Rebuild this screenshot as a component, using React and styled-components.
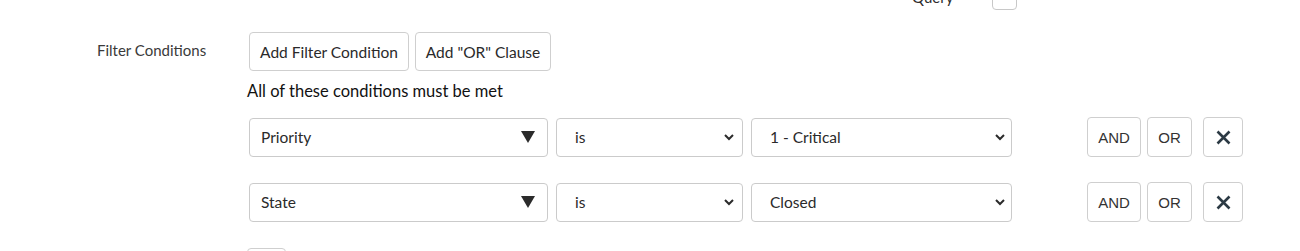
import React from "react";
import styled, { createGlobalStyle } from "styled-components";

const Global = createGlobalStyle`
  html, body { margin: 0; padding: 0; background: #fff; }
  body { font-family: "Lato", "Open Sans", sans-serif; color: #1e1e1e; overflow: hidden; }
  * { box-sizing: border-box; }
`;

const Page = styled.div`
  width: 1300px;
  padding-left: 97px;
  margin-top: -16px;
`;

const TopRow = styled.div`
  display: flex;
  align-items: center;
  height: 26px;
  margin-left: 815px;
  gap: 37px;
`;

const TopLabel = styled.span`
  font-size: 15px;
  color: #2e2e2e;
  width: 43px;
`;

const Checkbox = styled.span`
  display: block;
  width: 25px;
  height: 26px;
  border: 1px solid #c8c8c8;
  border-radius: 4px;
`;

const Section = styled.div`
  display: grid;
  grid-template-columns: 152px 1fr;
  margin-top: 22px;
`;

const Label = styled.div`
  font-size: 15px;
  color: #3a3a3a;
  padding-top: 9px;
`;

const Content = styled.div`
  display: flex;
  flex-direction: column;
`;

const ButtonRow = styled.div`
  display: flex;
  gap: 6px;
`;

const Button = styled.button`
  font-family: inherit;
  font-size: 15.5px;
  color: #2a2a2a;
  background: #fff;
  border: 1px solid #cfcfcf;
  border-radius: 4px;
  height: 39px;
  width: ${(p) => p.$w}px;
  padding: 0;
  display: flex;
  align-items: center;
  justify-content: center;
`;

const Title = styled.div`
  font-size: 16.5px;
  color: #111;
  margin: 10px 0 0 -2px;
  line-height: 20px;
`;

const Rows = styled.div`
  display: flex;
  flex-direction: column;
  gap: 25px;
  margin-top: 16px;
`;

const Row = styled.div`
  display: flex;
  align-items: center;
`;

const Selects = styled.div`
  display: flex;
  gap: 8px;
`;

const Select = styled.div`
  width: ${(p) => p.$w}px;
  height: 39px;
  border: 1px solid #cbcbcb;
  border-radius: 4px;
  display: flex;
  align-items: center;
  justify-content: space-between;
  padding: 0 ${(p) => p.$pr}px 0 ${(p) => p.$pl}px;
  font-size: 15.5px;
  color: #2a2a2a;
`;

const Actions = styled.div`
  display: flex;
  gap: 6px;
  margin-left: 75px;
`;

const SmallButton = styled.button`
  font-family: "Liberation Sans", Arial, sans-serif;
  font-size: 15px;
  color: #333;
  background: #fff;
  border: 1px solid #cfcfcf;
  border-radius: 4px;
  height: 40px;
  width: ${(p) => p.$w}px;
  margin-left: ${(p) => p.$ml || 0}px;
  padding: 0;
  display: flex;
  align-items: center;
  justify-content: center;
`;

const BottomButton = styled.div`
  width: 39px;
  height: 39px;
  margin-top: 26px;
  margin-left: -2px;
  border: 1px solid #cfcfcf;
  border-radius: 4px;
`;

const Triangle = () => (
  <svg width="14" height="12" viewBox="0 0 14 12">
    <polygon points="0,0 14,0 7,12" fill="#2b2b2b" />
  </svg>
);

const Chevron = () => (
  <svg width="10" height="7" viewBox="0 0 10 7">
    <polyline points="1,1 5,5 9,1" fill="none" stroke="#2b2b2b" strokeWidth="2" />
  </svg>
);

const XIcon = () => (
  <svg width="15" height="15" viewBox="0 0 15 15">
    <path d="M1.5 1.5 L13.5 13.5 M13.5 1.5 L1.5 13.5" stroke="#2c3a44" strokeWidth="2.6" strokeLinecap="butt" />
  </svg>
);

const conditions = [
  { field: "Priority", op: "is", value: "1 - Critical" },
  { field: "State", op: "is", value: "Closed" },
];

export default function App() {
  return (
    <>
      <Global />
      <Page>
        <TopRow>
          <TopLabel>Query</TopLabel>
          <Checkbox />
        </TopRow>
        <Section>
          <Label>Filter Conditions</Label>
          <Content>
            <ButtonRow>
              <Button $w={160}>Add Filter Condition</Button>
              <Button $w={136}>Add "OR" Clause</Button>
            </ButtonRow>
            <Title>All of these conditions must be met</Title>
            <Rows>
              {conditions.map((c) => (
                <Row key={c.field}>
                  <Selects>
                    <Select $w={299} $pl={11} $pr={12}>
                      <span>{c.field}</span>
                      <Triangle />
                    </Select>
                    <Select $w={187} $pl={18} $pr={8}>
                      <span>{c.op}</span>
                      <Chevron />
                    </Select>
                    <Select $w={261} $pl={18} $pr={6}>
                      <span>{c.value}</span>
                      <Chevron />
                    </Select>
                  </Selects>
                  <Actions>
                    <SmallButton $w={54}>AND</SmallButton>
                    <SmallButton $w={45}>OR</SmallButton>
                    <SmallButton $w={40} $ml={5}>
                      <XIcon />
                    </SmallButton>
                  </Actions>
                </Row>
              ))}
            </Rows>
            <BottomButton />
          </Content>
        </Section>
      </Page>
    </>
  );
}
